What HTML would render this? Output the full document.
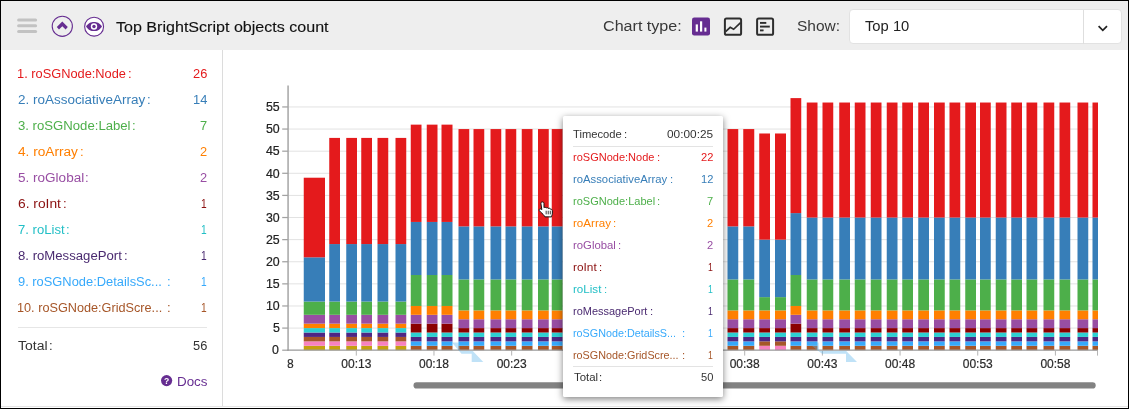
<!DOCTYPE html><html><head><meta charset="utf-8"><title>Top BrightScript objects count</title>
<style>

html,body{margin:0;padding:0;}
body{width:1129px;height:409px;overflow:hidden;background:#fff;font-family:"Liberation Sans", sans-serif;position:relative;}
.abs{position:absolute;}
.t{position:absolute;white-space:nowrap;line-height:1;font-family:"Liberation Sans", sans-serif;transform-origin:0 0;}
#txt{position:absolute;left:0;top:0;width:1129px;height:409px;will-change:transform;}
#frame{position:absolute;left:0;top:0;width:1127px;height:407px;border:1px solid #000;z-index:50;pointer-events:none;}
#hdr{position:absolute;left:1px;top:1px;width:1127px;height:49px;background:#eee;}
#vdiv{position:absolute;left:222px;top:50px;width:1px;height:357px;background:#dcdcdc;}
#botline{position:absolute;left:1px;top:406px;width:1127px;height:1px;background:#e4e4e4;}
#sel{position:absolute;left:849.4px;top:8.8px;width:273.1px;height:35.7px;background:#fff;border:1px solid #e2e2e2;border-radius:4px;box-sizing:border-box;}
#seldiv{position:absolute;left:1083px;top:10px;width:1px;height:34px;background:#dedede;}
#tip{position:absolute;left:563px;top:116px;width:160px;height:281px;background:#fff;border-radius:1.5px;box-shadow:0 2px 7px rgba(0,0,0,.5);}
.hl{position:absolute;height:1px;background:#e3e3e3;}

</style></head><body>
<div id="hdr"></div>
<svg class="abs" style="left:0;top:0" width="1129" height="51" viewBox="0 0 1129 51">
<line x1="18.6" y1="20.0" x2="35.6" y2="20.0" stroke="#c2c2c2" stroke-width="3.0" stroke-linecap="round"/>
<line x1="18.6" y1="25.7" x2="35.6" y2="25.7" stroke="#c2c2c2" stroke-width="3.0" stroke-linecap="round"/>
<line x1="18.6" y1="31.4" x2="35.6" y2="31.4" stroke="#c2c2c2" stroke-width="3.0" stroke-linecap="round"/>
<circle cx="62.3" cy="26.3" r="10.1" fill="none" stroke="#662d91" stroke-width="1.1"/>
<path d="M62.3 21.6 L67.8 27.1 L65.6 29.6 L62.3 26.2 L59.0 29.6 L56.8 27.1 Z" fill="#662d91"/>
<circle cx="94.1" cy="26.65" r="9.45" fill="#fff" stroke="#662d91" stroke-width="1.1"/>
<path d="M86 26.5 C88.5 22.6 91.2 21.9 94 21.9 C96.8 21.9 99.5 22.6 102 26.5 C99.5 30.4 96.8 31.1 94 31.1 C91.2 31.1 88.5 30.4 86 26.5 Z" fill="#662d91"/>
<circle cx="94" cy="26.5" r="3.2" fill="#fff"/>
<circle cx="94" cy="26.5" r="1.7" fill="#662d91"/>
<rect x="692" y="17.5" width="18" height="18" rx="2.2" fill="#662d91"/>
<rect x="695.7" y="24.4" width="2.2" height="7.2" fill="#fff"/>
<rect x="700.0" y="21.3" width="2.2" height="10.3" fill="#fff"/>
<rect x="704.4" y="27.6" width="2.0" height="4.0" fill="#fff"/>
<rect x="724.9" y="18.6" width="16.2" height="16.2" rx="1.6" fill="none" stroke="#2e2e2e" stroke-width="2.0"/>
<polyline points="725.6,31.6 730.2,27.3 733.6,29.3 740.6,22.6" fill="none" stroke="#2e2e2e" stroke-width="1.7"/>
<rect x="757.1" y="18.6" width="16.0" height="16.2" rx="1.6" fill="none" stroke="#2e2e2e" stroke-width="2.0"/>
<line x1="760" y1="22.9" x2="766.3" y2="22.9" stroke="#2e2e2e" stroke-width="1.9"/>
<line x1="760" y1="26.6" x2="769.8" y2="26.6" stroke="#2e2e2e" stroke-width="1.9"/>
<line x1="760" y1="30.4" x2="763.6" y2="30.4" stroke="#2e2e2e" stroke-width="1.9"/>
</svg>
<div id="sel"></div><div id="seldiv"></div>
<svg class="abs" style="left:1090px;top:18px" width="26" height="20" viewBox="1090 18 26 20"><polyline points="1098.6,26.1 1102.8,30.4 1107.0,26.1" fill="none" stroke="#222" stroke-width="1.7" stroke-linecap="butt" stroke-linejoin="miter"/></svg>
<div id="vdiv"></div><div id="botline"></div>
<div class="hl" style="left:18.4px;top:327px;width:188.3px;background:#e6e6e6"></div>
<svg class="abs" style="left:158px;top:372px;will-change:transform" width="18" height="18" viewBox="158 372 18 18"><circle cx="166.6" cy="380.6" r="5.6" fill="#662d91"/><text x="166.6" y="383.7" font-size="8.6" font-weight="700" fill="#fff" text-anchor="middle" font-family='"Liberation Sans", sans-serif'>?</text></svg>
<svg class="abs" style="left:0;top:0;will-change:transform" width="1129" height="409" viewBox="0 0 1129 409">
<defs><clipPath id="cp"><rect x="288" y="60" width="810" height="330"/></clipPath><clipPath id="cpx"><rect x="287.3" y="351" width="815" height="30"/></clipPath></defs>
<line x1="288.5" y1="328.09" x2="1098" y2="328.09" stroke="#e2e2e2" stroke-width="1"/>
<line x1="288.5" y1="305.97" x2="1098" y2="305.97" stroke="#e2e2e2" stroke-width="1"/>
<line x1="288.5" y1="283.86" x2="1098" y2="283.86" stroke="#e2e2e2" stroke-width="1"/>
<line x1="288.5" y1="261.75" x2="1098" y2="261.75" stroke="#e2e2e2" stroke-width="1"/>
<line x1="288.5" y1="239.63" x2="1098" y2="239.63" stroke="#e2e2e2" stroke-width="1"/>
<line x1="288.5" y1="217.52" x2="1098" y2="217.52" stroke="#e2e2e2" stroke-width="1"/>
<line x1="288.5" y1="195.41" x2="1098" y2="195.41" stroke="#e2e2e2" stroke-width="1"/>
<line x1="288.5" y1="173.29" x2="1098" y2="173.29" stroke="#e2e2e2" stroke-width="1"/>
<line x1="288.5" y1="151.18" x2="1098" y2="151.18" stroke="#e2e2e2" stroke-width="1"/>
<line x1="288.5" y1="129.06" x2="1098" y2="129.06" stroke="#e2e2e2" stroke-width="1"/>
<line x1="288.5" y1="106.95" x2="1098" y2="106.95" stroke="#e2e2e2" stroke-width="1"/>
<g clip-path="url(#cp)">
<rect x="303.75" y="345.777" width="21.25" height="4.423" fill="#c5a00f"/>
<rect x="303.75" y="341.355" width="21.25" height="4.423" fill="#f781bf"/>
<rect x="303.75" y="336.932" width="21.25" height="4.423" fill="#a65628"/>
<rect x="303.75" y="332.509" width="21.25" height="4.423" fill="#4f2683"/>
<rect x="303.75" y="328.087" width="21.25" height="4.423" fill="#2ecfd2"/>
<rect x="303.75" y="323.664" width="21.25" height="4.423" fill="#ff7f00"/>
<rect x="303.75" y="314.818" width="21.25" height="8.845" fill="#984ea3"/>
<rect x="303.75" y="301.550" width="21.25" height="13.268" fill="#4daf4a"/>
<rect x="303.75" y="257.323" width="21.25" height="44.227" fill="#377eb8"/>
<rect x="303.75" y="177.715" width="21.25" height="79.609" fill="#e41a1c"/>
<rect x="329.25" y="345.777" width="10.75" height="4.423" fill="#c5a00f"/>
<rect x="329.25" y="341.355" width="10.75" height="4.423" fill="#f781bf"/>
<rect x="329.25" y="336.932" width="10.75" height="4.423" fill="#a65628"/>
<rect x="329.25" y="332.509" width="10.75" height="4.423" fill="#4f2683"/>
<rect x="329.25" y="328.087" width="10.75" height="4.423" fill="#2ecfd2"/>
<rect x="329.25" y="323.664" width="10.75" height="4.423" fill="#ff7f00"/>
<rect x="329.25" y="314.818" width="10.75" height="8.845" fill="#984ea3"/>
<rect x="329.25" y="301.550" width="10.75" height="13.268" fill="#4daf4a"/>
<rect x="329.25" y="244.055" width="10.75" height="57.495" fill="#377eb8"/>
<rect x="329.25" y="137.910" width="10.75" height="106.145" fill="#e41a1c"/>
<rect x="346.25" y="345.777" width="10.75" height="4.423" fill="#c5a00f"/>
<rect x="346.25" y="341.355" width="10.75" height="4.423" fill="#f781bf"/>
<rect x="346.25" y="336.932" width="10.75" height="4.423" fill="#a65628"/>
<rect x="346.25" y="332.509" width="10.75" height="4.423" fill="#4f2683"/>
<rect x="346.25" y="328.087" width="10.75" height="4.423" fill="#2ecfd2"/>
<rect x="346.25" y="323.664" width="10.75" height="4.423" fill="#ff7f00"/>
<rect x="346.25" y="314.818" width="10.75" height="8.845" fill="#984ea3"/>
<rect x="346.25" y="301.550" width="10.75" height="13.268" fill="#4daf4a"/>
<rect x="346.25" y="244.055" width="10.75" height="57.495" fill="#377eb8"/>
<rect x="346.25" y="137.910" width="10.75" height="106.145" fill="#e41a1c"/>
<rect x="361.25" y="345.777" width="10.75" height="4.423" fill="#c5a00f"/>
<rect x="361.25" y="341.355" width="10.75" height="4.423" fill="#f781bf"/>
<rect x="361.25" y="336.932" width="10.75" height="4.423" fill="#a65628"/>
<rect x="361.25" y="332.509" width="10.75" height="4.423" fill="#4f2683"/>
<rect x="361.25" y="328.087" width="10.75" height="4.423" fill="#2ecfd2"/>
<rect x="361.25" y="323.664" width="10.75" height="4.423" fill="#ff7f00"/>
<rect x="361.25" y="314.818" width="10.75" height="8.845" fill="#984ea3"/>
<rect x="361.25" y="301.550" width="10.75" height="13.268" fill="#4daf4a"/>
<rect x="361.25" y="244.055" width="10.75" height="57.495" fill="#377eb8"/>
<rect x="361.25" y="137.910" width="10.75" height="106.145" fill="#e41a1c"/>
<rect x="377.5" y="345.777" width="10.75" height="4.423" fill="#c5a00f"/>
<rect x="377.5" y="341.355" width="10.75" height="4.423" fill="#f781bf"/>
<rect x="377.5" y="336.932" width="10.75" height="4.423" fill="#a65628"/>
<rect x="377.5" y="332.509" width="10.75" height="4.423" fill="#4f2683"/>
<rect x="377.5" y="328.087" width="10.75" height="4.423" fill="#2ecfd2"/>
<rect x="377.5" y="323.664" width="10.75" height="4.423" fill="#ff7f00"/>
<rect x="377.5" y="314.818" width="10.75" height="8.845" fill="#984ea3"/>
<rect x="377.5" y="301.550" width="10.75" height="13.268" fill="#4daf4a"/>
<rect x="377.5" y="244.055" width="10.75" height="57.495" fill="#377eb8"/>
<rect x="377.5" y="137.910" width="10.75" height="106.145" fill="#e41a1c"/>
<rect x="395.5" y="345.777" width="10.75" height="4.423" fill="#c5a00f"/>
<rect x="395.5" y="341.355" width="10.75" height="4.423" fill="#f781bf"/>
<rect x="395.5" y="336.932" width="10.75" height="4.423" fill="#a65628"/>
<rect x="395.5" y="332.509" width="10.75" height="4.423" fill="#4f2683"/>
<rect x="395.5" y="328.087" width="10.75" height="4.423" fill="#2ecfd2"/>
<rect x="395.5" y="323.664" width="10.75" height="4.423" fill="#ff7f00"/>
<rect x="395.5" y="314.818" width="10.75" height="8.845" fill="#984ea3"/>
<rect x="395.5" y="301.550" width="10.75" height="13.268" fill="#4daf4a"/>
<rect x="395.5" y="244.055" width="10.75" height="57.495" fill="#377eb8"/>
<rect x="395.5" y="137.910" width="10.75" height="106.145" fill="#e41a1c"/>
<rect x="410.75" y="345.777" width="10.75" height="4.423" fill="#a65628"/>
<rect x="410.75" y="341.355" width="10.75" height="4.423" fill="#36a9fb"/>
<rect x="410.75" y="336.932" width="10.75" height="4.423" fill="#4f2683"/>
<rect x="410.75" y="332.509" width="10.75" height="4.423" fill="#2ecfd2"/>
<rect x="410.75" y="323.664" width="10.75" height="8.845" fill="#8b0000"/>
<rect x="410.75" y="314.818" width="10.75" height="8.845" fill="#984ea3"/>
<rect x="410.75" y="305.973" width="10.75" height="8.845" fill="#ff7f00"/>
<rect x="410.75" y="275.014" width="10.75" height="30.959" fill="#4daf4a"/>
<rect x="410.75" y="221.942" width="10.75" height="53.072" fill="#377eb8"/>
<rect x="410.75" y="124.642" width="10.75" height="97.299" fill="#e41a1c"/>
<rect x="426.75" y="345.777" width="10.75" height="4.423" fill="#a65628"/>
<rect x="426.75" y="341.355" width="10.75" height="4.423" fill="#36a9fb"/>
<rect x="426.75" y="336.932" width="10.75" height="4.423" fill="#4f2683"/>
<rect x="426.75" y="332.509" width="10.75" height="4.423" fill="#2ecfd2"/>
<rect x="426.75" y="323.664" width="10.75" height="8.845" fill="#8b0000"/>
<rect x="426.75" y="314.818" width="10.75" height="8.845" fill="#984ea3"/>
<rect x="426.75" y="305.973" width="10.75" height="8.845" fill="#ff7f00"/>
<rect x="426.75" y="275.014" width="10.75" height="30.959" fill="#4daf4a"/>
<rect x="426.75" y="221.942" width="10.75" height="53.072" fill="#377eb8"/>
<rect x="426.75" y="124.642" width="10.75" height="97.299" fill="#e41a1c"/>
<rect x="441.5" y="345.777" width="11.00" height="4.423" fill="#a65628"/>
<rect x="441.5" y="341.355" width="11.00" height="4.423" fill="#36a9fb"/>
<rect x="441.5" y="336.932" width="11.00" height="4.423" fill="#4f2683"/>
<rect x="441.5" y="332.509" width="11.00" height="4.423" fill="#2ecfd2"/>
<rect x="441.5" y="323.664" width="11.00" height="8.845" fill="#8b0000"/>
<rect x="441.5" y="314.818" width="11.00" height="8.845" fill="#984ea3"/>
<rect x="441.5" y="305.973" width="11.00" height="8.845" fill="#ff7f00"/>
<rect x="441.5" y="275.014" width="11.00" height="30.959" fill="#4daf4a"/>
<rect x="441.5" y="221.942" width="11.00" height="53.072" fill="#377eb8"/>
<rect x="441.5" y="124.642" width="11.00" height="97.299" fill="#e41a1c"/>
<rect x="458.5" y="345.777" width="10.75" height="4.423" fill="#a65628"/>
<rect x="458.5" y="341.355" width="10.75" height="4.423" fill="#36a9fb"/>
<rect x="458.5" y="336.932" width="10.75" height="4.423" fill="#4f2683"/>
<rect x="458.5" y="332.509" width="10.75" height="4.423" fill="#2ecfd2"/>
<rect x="458.5" y="328.087" width="10.75" height="4.423" fill="#8b0000"/>
<rect x="458.5" y="319.241" width="10.75" height="8.845" fill="#984ea3"/>
<rect x="458.5" y="310.396" width="10.75" height="8.845" fill="#ff7f00"/>
<rect x="458.5" y="279.437" width="10.75" height="30.959" fill="#4daf4a"/>
<rect x="458.5" y="226.364" width="10.75" height="53.072" fill="#377eb8"/>
<rect x="458.5" y="129.065" width="10.75" height="97.299" fill="#e41a1c"/>
<rect x="473.5" y="345.777" width="10.75" height="4.423" fill="#a65628"/>
<rect x="473.5" y="341.355" width="10.75" height="4.423" fill="#36a9fb"/>
<rect x="473.5" y="336.932" width="10.75" height="4.423" fill="#4f2683"/>
<rect x="473.5" y="332.509" width="10.75" height="4.423" fill="#2ecfd2"/>
<rect x="473.5" y="328.087" width="10.75" height="4.423" fill="#8b0000"/>
<rect x="473.5" y="319.241" width="10.75" height="8.845" fill="#984ea3"/>
<rect x="473.5" y="310.396" width="10.75" height="8.845" fill="#ff7f00"/>
<rect x="473.5" y="279.437" width="10.75" height="30.959" fill="#4daf4a"/>
<rect x="473.5" y="226.364" width="10.75" height="53.072" fill="#377eb8"/>
<rect x="473.5" y="129.065" width="10.75" height="97.299" fill="#e41a1c"/>
<rect x="490.5" y="345.777" width="10.75" height="4.423" fill="#a65628"/>
<rect x="490.5" y="341.355" width="10.75" height="4.423" fill="#36a9fb"/>
<rect x="490.5" y="336.932" width="10.75" height="4.423" fill="#4f2683"/>
<rect x="490.5" y="332.509" width="10.75" height="4.423" fill="#2ecfd2"/>
<rect x="490.5" y="328.087" width="10.75" height="4.423" fill="#8b0000"/>
<rect x="490.5" y="319.241" width="10.75" height="8.845" fill="#984ea3"/>
<rect x="490.5" y="310.396" width="10.75" height="8.845" fill="#ff7f00"/>
<rect x="490.5" y="279.437" width="10.75" height="30.959" fill="#4daf4a"/>
<rect x="490.5" y="226.364" width="10.75" height="53.072" fill="#377eb8"/>
<rect x="490.5" y="129.065" width="10.75" height="97.299" fill="#e41a1c"/>
<rect x="505.5" y="345.777" width="10.75" height="4.423" fill="#a65628"/>
<rect x="505.5" y="341.355" width="10.75" height="4.423" fill="#36a9fb"/>
<rect x="505.5" y="336.932" width="10.75" height="4.423" fill="#4f2683"/>
<rect x="505.5" y="332.509" width="10.75" height="4.423" fill="#2ecfd2"/>
<rect x="505.5" y="328.087" width="10.75" height="4.423" fill="#8b0000"/>
<rect x="505.5" y="319.241" width="10.75" height="8.845" fill="#984ea3"/>
<rect x="505.5" y="310.396" width="10.75" height="8.845" fill="#ff7f00"/>
<rect x="505.5" y="279.437" width="10.75" height="30.959" fill="#4daf4a"/>
<rect x="505.5" y="226.364" width="10.75" height="53.072" fill="#377eb8"/>
<rect x="505.5" y="129.065" width="10.75" height="97.299" fill="#e41a1c"/>
<rect x="521.75" y="345.777" width="10.75" height="4.423" fill="#a65628"/>
<rect x="521.75" y="341.355" width="10.75" height="4.423" fill="#36a9fb"/>
<rect x="521.75" y="336.932" width="10.75" height="4.423" fill="#4f2683"/>
<rect x="521.75" y="332.509" width="10.75" height="4.423" fill="#2ecfd2"/>
<rect x="521.75" y="328.087" width="10.75" height="4.423" fill="#8b0000"/>
<rect x="521.75" y="319.241" width="10.75" height="8.845" fill="#984ea3"/>
<rect x="521.75" y="310.396" width="10.75" height="8.845" fill="#ff7f00"/>
<rect x="521.75" y="279.437" width="10.75" height="30.959" fill="#4daf4a"/>
<rect x="521.75" y="226.364" width="10.75" height="53.072" fill="#377eb8"/>
<rect x="521.75" y="129.065" width="10.75" height="97.299" fill="#e41a1c"/>
<rect x="538.0" y="345.777" width="10.75" height="4.423" fill="#a65628"/>
<rect x="538.0" y="341.355" width="10.75" height="4.423" fill="#36a9fb"/>
<rect x="538.0" y="336.932" width="10.75" height="4.423" fill="#4f2683"/>
<rect x="538.0" y="332.509" width="10.75" height="4.423" fill="#2ecfd2"/>
<rect x="538.0" y="328.087" width="10.75" height="4.423" fill="#8b0000"/>
<rect x="538.0" y="319.241" width="10.75" height="8.845" fill="#984ea3"/>
<rect x="538.0" y="310.396" width="10.75" height="8.845" fill="#ff7f00"/>
<rect x="538.0" y="279.437" width="10.75" height="30.959" fill="#4daf4a"/>
<rect x="538.0" y="226.364" width="10.75" height="53.072" fill="#377eb8"/>
<rect x="538.0" y="129.065" width="10.75" height="97.299" fill="#e41a1c"/>
<rect x="551.75" y="345.777" width="10.75" height="4.423" fill="#a65628"/>
<rect x="551.75" y="341.355" width="10.75" height="4.423" fill="#36a9fb"/>
<rect x="551.75" y="336.932" width="10.75" height="4.423" fill="#4f2683"/>
<rect x="551.75" y="332.509" width="10.75" height="4.423" fill="#2ecfd2"/>
<rect x="551.75" y="328.087" width="10.75" height="4.423" fill="#8b0000"/>
<rect x="551.75" y="319.241" width="10.75" height="8.845" fill="#984ea3"/>
<rect x="551.75" y="310.396" width="10.75" height="8.845" fill="#ff7f00"/>
<rect x="551.75" y="279.437" width="10.75" height="30.959" fill="#4daf4a"/>
<rect x="551.75" y="226.364" width="10.75" height="53.072" fill="#377eb8"/>
<rect x="551.75" y="129.065" width="10.75" height="97.299" fill="#e41a1c"/>
<rect x="567.5" y="345.777" width="10.75" height="4.423" fill="#a65628"/>
<rect x="567.5" y="341.355" width="10.75" height="4.423" fill="#36a9fb"/>
<rect x="567.5" y="336.932" width="10.75" height="4.423" fill="#4f2683"/>
<rect x="567.5" y="332.509" width="10.75" height="4.423" fill="#2ecfd2"/>
<rect x="567.5" y="328.087" width="10.75" height="4.423" fill="#8b0000"/>
<rect x="567.5" y="319.241" width="10.75" height="8.845" fill="#984ea3"/>
<rect x="567.5" y="310.396" width="10.75" height="8.845" fill="#ff7f00"/>
<rect x="567.5" y="279.437" width="10.75" height="30.959" fill="#4daf4a"/>
<rect x="567.5" y="226.364" width="10.75" height="53.072" fill="#377eb8"/>
<rect x="567.5" y="129.065" width="10.75" height="97.299" fill="#e41a1c"/>
<rect x="583.0" y="345.777" width="10.75" height="4.423" fill="#a65628"/>
<rect x="583.0" y="341.355" width="10.75" height="4.423" fill="#36a9fb"/>
<rect x="583.0" y="336.932" width="10.75" height="4.423" fill="#4f2683"/>
<rect x="583.0" y="332.509" width="10.75" height="4.423" fill="#2ecfd2"/>
<rect x="583.0" y="328.087" width="10.75" height="4.423" fill="#8b0000"/>
<rect x="583.0" y="319.241" width="10.75" height="8.845" fill="#984ea3"/>
<rect x="583.0" y="310.396" width="10.75" height="8.845" fill="#ff7f00"/>
<rect x="583.0" y="279.437" width="10.75" height="30.959" fill="#4daf4a"/>
<rect x="583.0" y="226.364" width="10.75" height="53.072" fill="#377eb8"/>
<rect x="583.0" y="129.065" width="10.75" height="97.299" fill="#e41a1c"/>
<rect x="598.5" y="345.777" width="10.75" height="4.423" fill="#a65628"/>
<rect x="598.5" y="341.355" width="10.75" height="4.423" fill="#36a9fb"/>
<rect x="598.5" y="336.932" width="10.75" height="4.423" fill="#4f2683"/>
<rect x="598.5" y="332.509" width="10.75" height="4.423" fill="#2ecfd2"/>
<rect x="598.5" y="328.087" width="10.75" height="4.423" fill="#8b0000"/>
<rect x="598.5" y="319.241" width="10.75" height="8.845" fill="#984ea3"/>
<rect x="598.5" y="310.396" width="10.75" height="8.845" fill="#ff7f00"/>
<rect x="598.5" y="279.437" width="10.75" height="30.959" fill="#4daf4a"/>
<rect x="598.5" y="226.364" width="10.75" height="53.072" fill="#377eb8"/>
<rect x="598.5" y="129.065" width="10.75" height="97.299" fill="#e41a1c"/>
<rect x="614.0" y="345.777" width="10.75" height="4.423" fill="#a65628"/>
<rect x="614.0" y="341.355" width="10.75" height="4.423" fill="#36a9fb"/>
<rect x="614.0" y="336.932" width="10.75" height="4.423" fill="#4f2683"/>
<rect x="614.0" y="332.509" width="10.75" height="4.423" fill="#2ecfd2"/>
<rect x="614.0" y="328.087" width="10.75" height="4.423" fill="#8b0000"/>
<rect x="614.0" y="319.241" width="10.75" height="8.845" fill="#984ea3"/>
<rect x="614.0" y="310.396" width="10.75" height="8.845" fill="#ff7f00"/>
<rect x="614.0" y="279.437" width="10.75" height="30.959" fill="#4daf4a"/>
<rect x="614.0" y="226.364" width="10.75" height="53.072" fill="#377eb8"/>
<rect x="614.0" y="129.065" width="10.75" height="97.299" fill="#e41a1c"/>
<rect x="630.0" y="345.777" width="10.75" height="4.423" fill="#a65628"/>
<rect x="630.0" y="341.355" width="10.75" height="4.423" fill="#36a9fb"/>
<rect x="630.0" y="336.932" width="10.75" height="4.423" fill="#4f2683"/>
<rect x="630.0" y="332.509" width="10.75" height="4.423" fill="#2ecfd2"/>
<rect x="630.0" y="328.087" width="10.75" height="4.423" fill="#8b0000"/>
<rect x="630.0" y="319.241" width="10.75" height="8.845" fill="#984ea3"/>
<rect x="630.0" y="310.396" width="10.75" height="8.845" fill="#ff7f00"/>
<rect x="630.0" y="279.437" width="10.75" height="30.959" fill="#4daf4a"/>
<rect x="630.0" y="226.364" width="10.75" height="53.072" fill="#377eb8"/>
<rect x="630.0" y="129.065" width="10.75" height="97.299" fill="#e41a1c"/>
<rect x="645.5" y="345.777" width="10.75" height="4.423" fill="#a65628"/>
<rect x="645.5" y="341.355" width="10.75" height="4.423" fill="#36a9fb"/>
<rect x="645.5" y="336.932" width="10.75" height="4.423" fill="#4f2683"/>
<rect x="645.5" y="332.509" width="10.75" height="4.423" fill="#2ecfd2"/>
<rect x="645.5" y="328.087" width="10.75" height="4.423" fill="#8b0000"/>
<rect x="645.5" y="319.241" width="10.75" height="8.845" fill="#984ea3"/>
<rect x="645.5" y="310.396" width="10.75" height="8.845" fill="#ff7f00"/>
<rect x="645.5" y="279.437" width="10.75" height="30.959" fill="#4daf4a"/>
<rect x="645.5" y="226.364" width="10.75" height="53.072" fill="#377eb8"/>
<rect x="645.5" y="129.065" width="10.75" height="97.299" fill="#e41a1c"/>
<rect x="661.0" y="345.777" width="10.75" height="4.423" fill="#a65628"/>
<rect x="661.0" y="341.355" width="10.75" height="4.423" fill="#36a9fb"/>
<rect x="661.0" y="336.932" width="10.75" height="4.423" fill="#4f2683"/>
<rect x="661.0" y="332.509" width="10.75" height="4.423" fill="#2ecfd2"/>
<rect x="661.0" y="328.087" width="10.75" height="4.423" fill="#8b0000"/>
<rect x="661.0" y="319.241" width="10.75" height="8.845" fill="#984ea3"/>
<rect x="661.0" y="310.396" width="10.75" height="8.845" fill="#ff7f00"/>
<rect x="661.0" y="279.437" width="10.75" height="30.959" fill="#4daf4a"/>
<rect x="661.0" y="226.364" width="10.75" height="53.072" fill="#377eb8"/>
<rect x="661.0" y="129.065" width="10.75" height="97.299" fill="#e41a1c"/>
<rect x="676.5" y="345.777" width="10.75" height="4.423" fill="#a65628"/>
<rect x="676.5" y="341.355" width="10.75" height="4.423" fill="#36a9fb"/>
<rect x="676.5" y="336.932" width="10.75" height="4.423" fill="#4f2683"/>
<rect x="676.5" y="332.509" width="10.75" height="4.423" fill="#2ecfd2"/>
<rect x="676.5" y="328.087" width="10.75" height="4.423" fill="#8b0000"/>
<rect x="676.5" y="319.241" width="10.75" height="8.845" fill="#984ea3"/>
<rect x="676.5" y="310.396" width="10.75" height="8.845" fill="#ff7f00"/>
<rect x="676.5" y="279.437" width="10.75" height="30.959" fill="#4daf4a"/>
<rect x="676.5" y="226.364" width="10.75" height="53.072" fill="#377eb8"/>
<rect x="676.5" y="129.065" width="10.75" height="97.299" fill="#e41a1c"/>
<rect x="692.0" y="345.777" width="10.75" height="4.423" fill="#a65628"/>
<rect x="692.0" y="341.355" width="10.75" height="4.423" fill="#36a9fb"/>
<rect x="692.0" y="336.932" width="10.75" height="4.423" fill="#4f2683"/>
<rect x="692.0" y="332.509" width="10.75" height="4.423" fill="#2ecfd2"/>
<rect x="692.0" y="328.087" width="10.75" height="4.423" fill="#8b0000"/>
<rect x="692.0" y="319.241" width="10.75" height="8.845" fill="#984ea3"/>
<rect x="692.0" y="310.396" width="10.75" height="8.845" fill="#ff7f00"/>
<rect x="692.0" y="279.437" width="10.75" height="30.959" fill="#4daf4a"/>
<rect x="692.0" y="226.364" width="10.75" height="53.072" fill="#377eb8"/>
<rect x="692.0" y="129.065" width="10.75" height="97.299" fill="#e41a1c"/>
<rect x="712.0" y="345.777" width="10.75" height="4.423" fill="#a65628"/>
<rect x="712.0" y="341.355" width="10.75" height="4.423" fill="#36a9fb"/>
<rect x="712.0" y="336.932" width="10.75" height="4.423" fill="#4f2683"/>
<rect x="712.0" y="332.509" width="10.75" height="4.423" fill="#2ecfd2"/>
<rect x="712.0" y="328.087" width="10.75" height="4.423" fill="#8b0000"/>
<rect x="712.0" y="319.241" width="10.75" height="8.845" fill="#984ea3"/>
<rect x="712.0" y="310.396" width="10.75" height="8.845" fill="#ff7f00"/>
<rect x="712.0" y="279.437" width="10.75" height="30.959" fill="#4daf4a"/>
<rect x="712.0" y="226.364" width="10.75" height="53.072" fill="#377eb8"/>
<rect x="712.0" y="129.065" width="10.75" height="97.299" fill="#e41a1c"/>
<rect x="727.5" y="345.777" width="10.75" height="4.423" fill="#a65628"/>
<rect x="727.5" y="341.355" width="10.75" height="4.423" fill="#36a9fb"/>
<rect x="727.5" y="336.932" width="10.75" height="4.423" fill="#4f2683"/>
<rect x="727.5" y="332.509" width="10.75" height="4.423" fill="#2ecfd2"/>
<rect x="727.5" y="328.087" width="10.75" height="4.423" fill="#8b0000"/>
<rect x="727.5" y="319.241" width="10.75" height="8.845" fill="#984ea3"/>
<rect x="727.5" y="310.396" width="10.75" height="8.845" fill="#ff7f00"/>
<rect x="727.5" y="279.437" width="10.75" height="30.959" fill="#4daf4a"/>
<rect x="727.5" y="226.364" width="10.75" height="53.072" fill="#377eb8"/>
<rect x="727.5" y="129.065" width="10.75" height="97.299" fill="#e41a1c"/>
<rect x="743.25" y="345.777" width="11.00" height="4.423" fill="#a65628"/>
<rect x="743.25" y="341.355" width="11.00" height="4.423" fill="#36a9fb"/>
<rect x="743.25" y="336.932" width="11.00" height="4.423" fill="#4f2683"/>
<rect x="743.25" y="332.509" width="11.00" height="4.423" fill="#2ecfd2"/>
<rect x="743.25" y="328.087" width="11.00" height="4.423" fill="#8b0000"/>
<rect x="743.25" y="319.241" width="11.00" height="8.845" fill="#984ea3"/>
<rect x="743.25" y="310.396" width="11.00" height="8.845" fill="#ff7f00"/>
<rect x="743.25" y="279.437" width="11.00" height="30.959" fill="#4daf4a"/>
<rect x="743.25" y="226.364" width="11.00" height="53.072" fill="#377eb8"/>
<rect x="743.25" y="129.065" width="11.00" height="97.299" fill="#e41a1c"/>
<rect x="759.25" y="345.777" width="10.75" height="4.423" fill="#f781bf"/>
<rect x="759.25" y="341.355" width="10.75" height="4.423" fill="#a65628"/>
<rect x="759.25" y="336.932" width="10.75" height="4.423" fill="#4f2683"/>
<rect x="759.25" y="332.509" width="10.75" height="4.423" fill="#2ecfd2"/>
<rect x="759.25" y="328.087" width="10.75" height="4.423" fill="#8b0000"/>
<rect x="759.25" y="319.241" width="10.75" height="8.845" fill="#984ea3"/>
<rect x="759.25" y="310.396" width="10.75" height="8.845" fill="#ff7f00"/>
<rect x="759.25" y="297.128" width="10.75" height="13.268" fill="#4daf4a"/>
<rect x="759.25" y="239.632" width="10.75" height="57.495" fill="#377eb8"/>
<rect x="759.25" y="133.488" width="10.75" height="106.145" fill="#e41a1c"/>
<rect x="775.0" y="345.777" width="11.00" height="4.423" fill="#f781bf"/>
<rect x="775.0" y="341.355" width="11.00" height="4.423" fill="#a65628"/>
<rect x="775.0" y="336.932" width="11.00" height="4.423" fill="#4f2683"/>
<rect x="775.0" y="332.509" width="11.00" height="4.423" fill="#2ecfd2"/>
<rect x="775.0" y="328.087" width="11.00" height="4.423" fill="#8b0000"/>
<rect x="775.0" y="319.241" width="11.00" height="8.845" fill="#984ea3"/>
<rect x="775.0" y="310.396" width="11.00" height="8.845" fill="#ff7f00"/>
<rect x="775.0" y="297.128" width="11.00" height="13.268" fill="#4daf4a"/>
<rect x="775.0" y="239.632" width="11.00" height="57.495" fill="#377eb8"/>
<rect x="775.0" y="133.488" width="11.00" height="106.145" fill="#e41a1c"/>
<rect x="790.5" y="345.777" width="10.75" height="4.423" fill="#a65628"/>
<rect x="790.5" y="341.355" width="10.75" height="4.423" fill="#36a9fb"/>
<rect x="790.5" y="336.932" width="10.75" height="4.423" fill="#4f2683"/>
<rect x="790.5" y="332.509" width="10.75" height="4.423" fill="#2ecfd2"/>
<rect x="790.5" y="323.664" width="10.75" height="8.845" fill="#8b0000"/>
<rect x="790.5" y="314.818" width="10.75" height="8.845" fill="#984ea3"/>
<rect x="790.5" y="305.973" width="10.75" height="8.845" fill="#ff7f00"/>
<rect x="790.5" y="275.014" width="10.75" height="30.959" fill="#4daf4a"/>
<rect x="790.5" y="213.096" width="10.75" height="61.918" fill="#377eb8"/>
<rect x="790.5" y="98.106" width="10.75" height="114.990" fill="#e41a1c"/>
<rect x="806.75" y="345.777" width="10.75" height="4.423" fill="#a65628"/>
<rect x="806.75" y="341.355" width="10.75" height="4.423" fill="#36a9fb"/>
<rect x="806.75" y="336.932" width="10.75" height="4.423" fill="#4f2683"/>
<rect x="806.75" y="332.509" width="10.75" height="4.423" fill="#2ecfd2"/>
<rect x="806.75" y="328.087" width="10.75" height="4.423" fill="#8b0000"/>
<rect x="806.75" y="319.241" width="10.75" height="8.845" fill="#984ea3"/>
<rect x="806.75" y="310.396" width="10.75" height="8.845" fill="#ff7f00"/>
<rect x="806.75" y="279.437" width="10.75" height="30.959" fill="#4daf4a"/>
<rect x="806.75" y="217.519" width="10.75" height="61.918" fill="#377eb8"/>
<rect x="806.75" y="102.529" width="10.75" height="114.990" fill="#e41a1c"/>
<rect x="822.5" y="345.777" width="10.75" height="4.423" fill="#a65628"/>
<rect x="822.5" y="341.355" width="10.75" height="4.423" fill="#36a9fb"/>
<rect x="822.5" y="336.932" width="10.75" height="4.423" fill="#4f2683"/>
<rect x="822.5" y="332.509" width="10.75" height="4.423" fill="#2ecfd2"/>
<rect x="822.5" y="328.087" width="10.75" height="4.423" fill="#8b0000"/>
<rect x="822.5" y="319.241" width="10.75" height="8.845" fill="#984ea3"/>
<rect x="822.5" y="310.396" width="10.75" height="8.845" fill="#ff7f00"/>
<rect x="822.5" y="279.437" width="10.75" height="30.959" fill="#4daf4a"/>
<rect x="822.5" y="217.519" width="10.75" height="61.918" fill="#377eb8"/>
<rect x="822.5" y="102.529" width="10.75" height="114.990" fill="#e41a1c"/>
<rect x="839.25" y="345.777" width="10.75" height="4.423" fill="#a65628"/>
<rect x="839.25" y="341.355" width="10.75" height="4.423" fill="#36a9fb"/>
<rect x="839.25" y="336.932" width="10.75" height="4.423" fill="#4f2683"/>
<rect x="839.25" y="332.509" width="10.75" height="4.423" fill="#2ecfd2"/>
<rect x="839.25" y="328.087" width="10.75" height="4.423" fill="#8b0000"/>
<rect x="839.25" y="319.241" width="10.75" height="8.845" fill="#984ea3"/>
<rect x="839.25" y="310.396" width="10.75" height="8.845" fill="#ff7f00"/>
<rect x="839.25" y="279.437" width="10.75" height="30.959" fill="#4daf4a"/>
<rect x="839.25" y="217.519" width="10.75" height="61.918" fill="#377eb8"/>
<rect x="839.25" y="102.529" width="10.75" height="114.990" fill="#e41a1c"/>
<rect x="854.75" y="345.777" width="10.75" height="4.423" fill="#a65628"/>
<rect x="854.75" y="341.355" width="10.75" height="4.423" fill="#36a9fb"/>
<rect x="854.75" y="336.932" width="10.75" height="4.423" fill="#4f2683"/>
<rect x="854.75" y="332.509" width="10.75" height="4.423" fill="#2ecfd2"/>
<rect x="854.75" y="328.087" width="10.75" height="4.423" fill="#8b0000"/>
<rect x="854.75" y="319.241" width="10.75" height="8.845" fill="#984ea3"/>
<rect x="854.75" y="310.396" width="10.75" height="8.845" fill="#ff7f00"/>
<rect x="854.75" y="279.437" width="10.75" height="30.959" fill="#4daf4a"/>
<rect x="854.75" y="217.519" width="10.75" height="61.918" fill="#377eb8"/>
<rect x="854.75" y="102.529" width="10.75" height="114.990" fill="#e41a1c"/>
<rect x="870.75" y="345.777" width="10.75" height="4.423" fill="#a65628"/>
<rect x="870.75" y="341.355" width="10.75" height="4.423" fill="#36a9fb"/>
<rect x="870.75" y="336.932" width="10.75" height="4.423" fill="#4f2683"/>
<rect x="870.75" y="332.509" width="10.75" height="4.423" fill="#2ecfd2"/>
<rect x="870.75" y="328.087" width="10.75" height="4.423" fill="#8b0000"/>
<rect x="870.75" y="319.241" width="10.75" height="8.845" fill="#984ea3"/>
<rect x="870.75" y="310.396" width="10.75" height="8.845" fill="#ff7f00"/>
<rect x="870.75" y="279.437" width="10.75" height="30.959" fill="#4daf4a"/>
<rect x="870.75" y="217.519" width="10.75" height="61.918" fill="#377eb8"/>
<rect x="870.75" y="102.529" width="10.75" height="114.990" fill="#e41a1c"/>
<rect x="886.75" y="345.777" width="10.75" height="4.423" fill="#a65628"/>
<rect x="886.75" y="341.355" width="10.75" height="4.423" fill="#36a9fb"/>
<rect x="886.75" y="336.932" width="10.75" height="4.423" fill="#4f2683"/>
<rect x="886.75" y="332.509" width="10.75" height="4.423" fill="#2ecfd2"/>
<rect x="886.75" y="328.087" width="10.75" height="4.423" fill="#8b0000"/>
<rect x="886.75" y="319.241" width="10.75" height="8.845" fill="#984ea3"/>
<rect x="886.75" y="310.396" width="10.75" height="8.845" fill="#ff7f00"/>
<rect x="886.75" y="279.437" width="10.75" height="30.959" fill="#4daf4a"/>
<rect x="886.75" y="217.519" width="10.75" height="61.918" fill="#377eb8"/>
<rect x="886.75" y="102.529" width="10.75" height="114.990" fill="#e41a1c"/>
<rect x="902.25" y="345.777" width="10.75" height="4.423" fill="#a65628"/>
<rect x="902.25" y="341.355" width="10.75" height="4.423" fill="#36a9fb"/>
<rect x="902.25" y="336.932" width="10.75" height="4.423" fill="#4f2683"/>
<rect x="902.25" y="332.509" width="10.75" height="4.423" fill="#2ecfd2"/>
<rect x="902.25" y="328.087" width="10.75" height="4.423" fill="#8b0000"/>
<rect x="902.25" y="319.241" width="10.75" height="8.845" fill="#984ea3"/>
<rect x="902.25" y="310.396" width="10.75" height="8.845" fill="#ff7f00"/>
<rect x="902.25" y="279.437" width="10.75" height="30.959" fill="#4daf4a"/>
<rect x="902.25" y="217.519" width="10.75" height="61.918" fill="#377eb8"/>
<rect x="902.25" y="102.529" width="10.75" height="114.990" fill="#e41a1c"/>
<rect x="918.25" y="345.777" width="10.75" height="4.423" fill="#a65628"/>
<rect x="918.25" y="341.355" width="10.75" height="4.423" fill="#36a9fb"/>
<rect x="918.25" y="336.932" width="10.75" height="4.423" fill="#4f2683"/>
<rect x="918.25" y="332.509" width="10.75" height="4.423" fill="#2ecfd2"/>
<rect x="918.25" y="328.087" width="10.75" height="4.423" fill="#8b0000"/>
<rect x="918.25" y="319.241" width="10.75" height="8.845" fill="#984ea3"/>
<rect x="918.25" y="310.396" width="10.75" height="8.845" fill="#ff7f00"/>
<rect x="918.25" y="279.437" width="10.75" height="30.959" fill="#4daf4a"/>
<rect x="918.25" y="217.519" width="10.75" height="61.918" fill="#377eb8"/>
<rect x="918.25" y="102.529" width="10.75" height="114.990" fill="#e41a1c"/>
<rect x="934.0" y="345.777" width="10.75" height="4.423" fill="#a65628"/>
<rect x="934.0" y="341.355" width="10.75" height="4.423" fill="#36a9fb"/>
<rect x="934.0" y="336.932" width="10.75" height="4.423" fill="#4f2683"/>
<rect x="934.0" y="332.509" width="10.75" height="4.423" fill="#2ecfd2"/>
<rect x="934.0" y="328.087" width="10.75" height="4.423" fill="#8b0000"/>
<rect x="934.0" y="319.241" width="10.75" height="8.845" fill="#984ea3"/>
<rect x="934.0" y="310.396" width="10.75" height="8.845" fill="#ff7f00"/>
<rect x="934.0" y="279.437" width="10.75" height="30.959" fill="#4daf4a"/>
<rect x="934.0" y="217.519" width="10.75" height="61.918" fill="#377eb8"/>
<rect x="934.0" y="102.529" width="10.75" height="114.990" fill="#e41a1c"/>
<rect x="949.5" y="345.777" width="10.75" height="4.423" fill="#a65628"/>
<rect x="949.5" y="341.355" width="10.75" height="4.423" fill="#36a9fb"/>
<rect x="949.5" y="336.932" width="10.75" height="4.423" fill="#4f2683"/>
<rect x="949.5" y="332.509" width="10.75" height="4.423" fill="#2ecfd2"/>
<rect x="949.5" y="328.087" width="10.75" height="4.423" fill="#8b0000"/>
<rect x="949.5" y="319.241" width="10.75" height="8.845" fill="#984ea3"/>
<rect x="949.5" y="310.396" width="10.75" height="8.845" fill="#ff7f00"/>
<rect x="949.5" y="279.437" width="10.75" height="30.959" fill="#4daf4a"/>
<rect x="949.5" y="217.519" width="10.75" height="61.918" fill="#377eb8"/>
<rect x="949.5" y="102.529" width="10.75" height="114.990" fill="#e41a1c"/>
<rect x="965.25" y="345.777" width="10.75" height="4.423" fill="#a65628"/>
<rect x="965.25" y="341.355" width="10.75" height="4.423" fill="#36a9fb"/>
<rect x="965.25" y="336.932" width="10.75" height="4.423" fill="#4f2683"/>
<rect x="965.25" y="332.509" width="10.75" height="4.423" fill="#2ecfd2"/>
<rect x="965.25" y="328.087" width="10.75" height="4.423" fill="#8b0000"/>
<rect x="965.25" y="319.241" width="10.75" height="8.845" fill="#984ea3"/>
<rect x="965.25" y="310.396" width="10.75" height="8.845" fill="#ff7f00"/>
<rect x="965.25" y="279.437" width="10.75" height="30.959" fill="#4daf4a"/>
<rect x="965.25" y="217.519" width="10.75" height="61.918" fill="#377eb8"/>
<rect x="965.25" y="102.529" width="10.75" height="114.990" fill="#e41a1c"/>
<rect x="980.0" y="345.777" width="10.75" height="4.423" fill="#a65628"/>
<rect x="980.0" y="341.355" width="10.75" height="4.423" fill="#36a9fb"/>
<rect x="980.0" y="336.932" width="10.75" height="4.423" fill="#4f2683"/>
<rect x="980.0" y="332.509" width="10.75" height="4.423" fill="#2ecfd2"/>
<rect x="980.0" y="328.087" width="10.75" height="4.423" fill="#8b0000"/>
<rect x="980.0" y="319.241" width="10.75" height="8.845" fill="#984ea3"/>
<rect x="980.0" y="310.396" width="10.75" height="8.845" fill="#ff7f00"/>
<rect x="980.0" y="279.437" width="10.75" height="30.959" fill="#4daf4a"/>
<rect x="980.0" y="217.519" width="10.75" height="61.918" fill="#377eb8"/>
<rect x="980.0" y="102.529" width="10.75" height="114.990" fill="#e41a1c"/>
<rect x="995.75" y="345.777" width="10.75" height="4.423" fill="#a65628"/>
<rect x="995.75" y="341.355" width="10.75" height="4.423" fill="#36a9fb"/>
<rect x="995.75" y="336.932" width="10.75" height="4.423" fill="#4f2683"/>
<rect x="995.75" y="332.509" width="10.75" height="4.423" fill="#2ecfd2"/>
<rect x="995.75" y="328.087" width="10.75" height="4.423" fill="#8b0000"/>
<rect x="995.75" y="319.241" width="10.75" height="8.845" fill="#984ea3"/>
<rect x="995.75" y="310.396" width="10.75" height="8.845" fill="#ff7f00"/>
<rect x="995.75" y="279.437" width="10.75" height="30.959" fill="#4daf4a"/>
<rect x="995.75" y="217.519" width="10.75" height="61.918" fill="#377eb8"/>
<rect x="995.75" y="102.529" width="10.75" height="114.990" fill="#e41a1c"/>
<rect x="1011.25" y="345.777" width="10.75" height="4.423" fill="#a65628"/>
<rect x="1011.25" y="341.355" width="10.75" height="4.423" fill="#36a9fb"/>
<rect x="1011.25" y="336.932" width="10.75" height="4.423" fill="#4f2683"/>
<rect x="1011.25" y="332.509" width="10.75" height="4.423" fill="#2ecfd2"/>
<rect x="1011.25" y="328.087" width="10.75" height="4.423" fill="#8b0000"/>
<rect x="1011.25" y="319.241" width="10.75" height="8.845" fill="#984ea3"/>
<rect x="1011.25" y="310.396" width="10.75" height="8.845" fill="#ff7f00"/>
<rect x="1011.25" y="279.437" width="10.75" height="30.959" fill="#4daf4a"/>
<rect x="1011.25" y="217.519" width="10.75" height="61.918" fill="#377eb8"/>
<rect x="1011.25" y="102.529" width="10.75" height="114.990" fill="#e41a1c"/>
<rect x="1026.5" y="345.777" width="10.75" height="4.423" fill="#a65628"/>
<rect x="1026.5" y="341.355" width="10.75" height="4.423" fill="#36a9fb"/>
<rect x="1026.5" y="336.932" width="10.75" height="4.423" fill="#4f2683"/>
<rect x="1026.5" y="332.509" width="10.75" height="4.423" fill="#2ecfd2"/>
<rect x="1026.5" y="328.087" width="10.75" height="4.423" fill="#8b0000"/>
<rect x="1026.5" y="319.241" width="10.75" height="8.845" fill="#984ea3"/>
<rect x="1026.5" y="310.396" width="10.75" height="8.845" fill="#ff7f00"/>
<rect x="1026.5" y="279.437" width="10.75" height="30.959" fill="#4daf4a"/>
<rect x="1026.5" y="217.519" width="10.75" height="61.918" fill="#377eb8"/>
<rect x="1026.5" y="102.529" width="10.75" height="114.990" fill="#e41a1c"/>
<rect x="1043.5" y="345.777" width="10.75" height="4.423" fill="#a65628"/>
<rect x="1043.5" y="341.355" width="10.75" height="4.423" fill="#36a9fb"/>
<rect x="1043.5" y="336.932" width="10.75" height="4.423" fill="#4f2683"/>
<rect x="1043.5" y="332.509" width="10.75" height="4.423" fill="#2ecfd2"/>
<rect x="1043.5" y="328.087" width="10.75" height="4.423" fill="#8b0000"/>
<rect x="1043.5" y="319.241" width="10.75" height="8.845" fill="#984ea3"/>
<rect x="1043.5" y="310.396" width="10.75" height="8.845" fill="#ff7f00"/>
<rect x="1043.5" y="279.437" width="10.75" height="30.959" fill="#4daf4a"/>
<rect x="1043.5" y="217.519" width="10.75" height="61.918" fill="#377eb8"/>
<rect x="1043.5" y="102.529" width="10.75" height="114.990" fill="#e41a1c"/>
<rect x="1059.5" y="345.777" width="10.75" height="4.423" fill="#a65628"/>
<rect x="1059.5" y="341.355" width="10.75" height="4.423" fill="#36a9fb"/>
<rect x="1059.5" y="336.932" width="10.75" height="4.423" fill="#4f2683"/>
<rect x="1059.5" y="332.509" width="10.75" height="4.423" fill="#2ecfd2"/>
<rect x="1059.5" y="328.087" width="10.75" height="4.423" fill="#8b0000"/>
<rect x="1059.5" y="319.241" width="10.75" height="8.845" fill="#984ea3"/>
<rect x="1059.5" y="310.396" width="10.75" height="8.845" fill="#ff7f00"/>
<rect x="1059.5" y="279.437" width="10.75" height="30.959" fill="#4daf4a"/>
<rect x="1059.5" y="217.519" width="10.75" height="61.918" fill="#377eb8"/>
<rect x="1059.5" y="102.529" width="10.75" height="114.990" fill="#e41a1c"/>
<rect x="1077.5" y="345.777" width="10.75" height="4.423" fill="#a65628"/>
<rect x="1077.5" y="341.355" width="10.75" height="4.423" fill="#36a9fb"/>
<rect x="1077.5" y="336.932" width="10.75" height="4.423" fill="#4f2683"/>
<rect x="1077.5" y="332.509" width="10.75" height="4.423" fill="#2ecfd2"/>
<rect x="1077.5" y="328.087" width="10.75" height="4.423" fill="#8b0000"/>
<rect x="1077.5" y="319.241" width="10.75" height="8.845" fill="#984ea3"/>
<rect x="1077.5" y="310.396" width="10.75" height="8.845" fill="#ff7f00"/>
<rect x="1077.5" y="279.437" width="10.75" height="30.959" fill="#4daf4a"/>
<rect x="1077.5" y="217.519" width="10.75" height="61.918" fill="#377eb8"/>
<rect x="1077.5" y="102.529" width="10.75" height="114.990" fill="#e41a1c"/>
<rect x="1092.5" y="345.777" width="5.50" height="4.423" fill="#a65628"/>
<rect x="1092.5" y="341.355" width="5.50" height="4.423" fill="#36a9fb"/>
<rect x="1092.5" y="336.932" width="5.50" height="4.423" fill="#4f2683"/>
<rect x="1092.5" y="332.509" width="5.50" height="4.423" fill="#2ecfd2"/>
<rect x="1092.5" y="328.087" width="5.50" height="4.423" fill="#8b0000"/>
<rect x="1092.5" y="319.241" width="5.50" height="8.845" fill="#984ea3"/>
<rect x="1092.5" y="310.396" width="5.50" height="8.845" fill="#ff7f00"/>
<rect x="1092.5" y="279.437" width="5.50" height="30.959" fill="#4daf4a"/>
<rect x="1092.5" y="217.519" width="5.50" height="61.918" fill="#377eb8"/>
<rect x="1092.5" y="102.529" width="5.50" height="114.990" fill="#e41a1c"/>
</g>
<line x1="288.07" y1="85.5" x2="288.07" y2="350.7" stroke="#a2a2a2" stroke-width="1.45"/>
<line x1="282.2" y1="350.20" x2="288.07" y2="350.20" stroke="#a2a2a2" stroke-width="1.25"/>
<line x1="282.2" y1="328.09" x2="288.07" y2="328.09" stroke="#a2a2a2" stroke-width="1.25"/>
<line x1="282.2" y1="305.97" x2="288.07" y2="305.97" stroke="#a2a2a2" stroke-width="1.25"/>
<line x1="282.2" y1="283.86" x2="288.07" y2="283.86" stroke="#a2a2a2" stroke-width="1.25"/>
<line x1="282.2" y1="261.75" x2="288.07" y2="261.75" stroke="#a2a2a2" stroke-width="1.25"/>
<line x1="282.2" y1="239.63" x2="288.07" y2="239.63" stroke="#a2a2a2" stroke-width="1.25"/>
<line x1="282.2" y1="217.52" x2="288.07" y2="217.52" stroke="#a2a2a2" stroke-width="1.25"/>
<line x1="282.2" y1="195.41" x2="288.07" y2="195.41" stroke="#a2a2a2" stroke-width="1.25"/>
<line x1="282.2" y1="173.29" x2="288.07" y2="173.29" stroke="#a2a2a2" stroke-width="1.25"/>
<line x1="282.2" y1="151.18" x2="288.07" y2="151.18" stroke="#a2a2a2" stroke-width="1.25"/>
<line x1="282.2" y1="129.06" x2="288.07" y2="129.06" stroke="#a2a2a2" stroke-width="1.25"/>
<line x1="282.2" y1="106.95" x2="288.07" y2="106.95" stroke="#a2a2a2" stroke-width="1.25"/>
<line x1="287.5" y1="350.2" x2="1098" y2="350.2" stroke="#999" stroke-width="1.3"/>
<line x1="356.30" y1="351" x2="356.30" y2="355.6" stroke="#b4b4b4" stroke-width="1"/>
<line x1="433.98" y1="351" x2="433.98" y2="355.6" stroke="#b4b4b4" stroke-width="1"/>
<line x1="511.66" y1="351" x2="511.66" y2="355.6" stroke="#b4b4b4" stroke-width="1"/>
<line x1="589.34" y1="351" x2="589.34" y2="355.6" stroke="#b4b4b4" stroke-width="1"/>
<line x1="667.02" y1="351" x2="667.02" y2="355.6" stroke="#b4b4b4" stroke-width="1"/>
<line x1="744.70" y1="351" x2="744.70" y2="355.6" stroke="#b4b4b4" stroke-width="1"/>
<line x1="822.38" y1="351" x2="822.38" y2="355.6" stroke="#b4b4b4" stroke-width="1"/>
<line x1="900.06" y1="351" x2="900.06" y2="355.6" stroke="#b4b4b4" stroke-width="1"/>
<line x1="977.74" y1="351" x2="977.74" y2="355.6" stroke="#b4b4b4" stroke-width="1"/>
<line x1="1055.42" y1="351" x2="1055.42" y2="355.6" stroke="#b4b4b4" stroke-width="1"/>
<line x1="1097.5" y1="351" x2="1097.5" y2="355.6" stroke="#b4b4b4" stroke-width="1"/>
<g clip-path="url(#cpx)">
<text x="278.62" y="367.7" font-size="12" fill="#2a2a2a" stroke="#2a2a2a" stroke-width="0.2" text-anchor="middle" font-family='"Liberation Sans", sans-serif'>00:08</text>
<text x="356.30" y="367.7" font-size="12" fill="#2a2a2a" stroke="#2a2a2a" stroke-width="0.2" text-anchor="middle" font-family='"Liberation Sans", sans-serif'>00:13</text>
<text x="433.98" y="367.7" font-size="12" fill="#2a2a2a" stroke="#2a2a2a" stroke-width="0.2" text-anchor="middle" font-family='"Liberation Sans", sans-serif'>00:18</text>
<text x="511.66" y="367.7" font-size="12" fill="#2a2a2a" stroke="#2a2a2a" stroke-width="0.2" text-anchor="middle" font-family='"Liberation Sans", sans-serif'>00:23</text>
<text x="589.34" y="367.7" font-size="12" fill="#2a2a2a" stroke="#2a2a2a" stroke-width="0.2" text-anchor="middle" font-family='"Liberation Sans", sans-serif'>00:28</text>
<text x="667.02" y="367.7" font-size="12" fill="#2a2a2a" stroke="#2a2a2a" stroke-width="0.2" text-anchor="middle" font-family='"Liberation Sans", sans-serif'>00:33</text>
<text x="744.70" y="367.7" font-size="12" fill="#2a2a2a" stroke="#2a2a2a" stroke-width="0.2" text-anchor="middle" font-family='"Liberation Sans", sans-serif'>00:38</text>
<text x="822.38" y="367.7" font-size="12" fill="#2a2a2a" stroke="#2a2a2a" stroke-width="0.2" text-anchor="middle" font-family='"Liberation Sans", sans-serif'>00:43</text>
<text x="900.06" y="367.7" font-size="12" fill="#2a2a2a" stroke="#2a2a2a" stroke-width="0.2" text-anchor="middle" font-family='"Liberation Sans", sans-serif'>00:48</text>
<text x="977.74" y="367.7" font-size="12" fill="#2a2a2a" stroke="#2a2a2a" stroke-width="0.2" text-anchor="middle" font-family='"Liberation Sans", sans-serif'>00:53</text>
<text x="1055.42" y="367.7" font-size="12" fill="#2a2a2a" stroke="#2a2a2a" stroke-width="0.2" text-anchor="middle" font-family='"Liberation Sans", sans-serif'>00:58</text>
</g>
<path d="M451.9 342.6 L459.2 342.6 L460.4 351 L472.8 351 L483.3 362 L471.7 362 L471.7 353.7 L461.5 353.7 Z" fill="#5ab4ea" fill-opacity="0.38"/>
<path d="M807.6 342.6 L818.6 342.6 L819.0 351 L846.2 351 L857.0 362 L846.0 362 L846.0 353.7 L822.0 353.7 Z" fill="#5ab4ea" fill-opacity="0.38"/>
<line x1="416.6" y1="385.4" x2="1092.6" y2="385.4" stroke="#828282" stroke-width="6.2" stroke-linecap="round"/>
<g transform="translate(538.6,201.2) scale(0.90)"><path d="M4.2 0.8 C5.4 0.8 6.0 1.6 6.0 2.8 L6.0 7.2 C6.6 6.6 8.0 6.7 8.4 7.6 C9.1 6.9 10.6 7.1 10.9 8.1 C11.7 7.5 13.2 7.9 13.4 9.0 C14.6 8.8 15.3 9.6 15.3 10.8 L15.3 13.2 C15.3 15.4 14.4 16.0 14.2 17.4 L7.0 17.4 C6.2 15.6 4.4 14.0 2.2 12.0 C0.6 10.6 0.2 9.6 1.0 8.9 C1.8 8.2 2.8 8.6 3.6 9.4 L2.6 2.8 C2.5 1.6 3.0 0.8 4.2 0.8 Z" fill="#fff" stroke="#111" stroke-width="1.1" stroke-linejoin="round"/><line x1="8.4" y1="10.6" x2="8.4" y2="14.6" stroke="#111" stroke-width="0.9"/><line x1="10.7" y1="10.6" x2="10.7" y2="14.6" stroke="#111" stroke-width="0.9"/><line x1="13.0" y1="10.6" x2="13.0" y2="14.6" stroke="#111" stroke-width="0.9"/></g>
</svg>
<div id="tip"></div>
<div class="hl" style="left:573px;top:146px;width:140px"></div>
<div class="hl" style="left:573px;top:366px;width:140px"></div>
<div id="txt">
<span class="t" id="title" style="font-size:14px;top:20px;left:115.57px;color:#111;-webkit-text-stroke:0.12px #111;transform:scaleX(1.1477);">Top BrightScript objects count</span>
<span class="t" id="ctype" style="font-size:14px;top:19px;left:602.92px;color:#383838;transform:scaleX(1.1500);">Chart type:</span>
<span class="t" id="show" style="font-size:14px;top:19px;left:796.64px;color:#383838;transform:scaleX(1.1055);">Show:</span>
<span class="t" id="top10" style="font-size:14px;top:19px;left:864.55px;color:#222;transform:scaleX(1.0535);">Top 10</span>
<span class="t" id="lp0" style="font-size:12px;top:68px;left:17.42px;color:#e41a1c;transform:scaleX(1.0679);">1. roSGNode:Node</span>
<span class="t" id="lpc0" style="font-size:12px;top:68px;left:128.21px;color:#e41a1c;transform:scaleX(1.1000);">:</span>
<span class="t" id="lpv0" style="font-size:12px;top:68px;left:192.91px;color:#e41a1c;transform:scaleX(1.0700);">26</span>
<span class="t" id="lp1" style="font-size:12px;top:94px;left:17.70px;color:#377eb8;transform:scaleX(1.1223);">2. roAssociativeArray</span>
<span class="t" id="lpc1" style="font-size:12px;top:94px;left:146.91px;color:#377eb8;transform:scaleX(1.1000);">:</span>
<span class="t" id="lpv1" style="font-size:12px;top:94px;left:192.61px;color:#377eb8;transform:scaleX(1.0700);">14</span>
<span class="t" id="lp2" style="font-size:12px;top:120px;left:17.64px;color:#4daf4a;transform:scaleX(1.0955);">3. roSGNode:Label</span>
<span class="t" id="lpc2" style="font-size:12px;top:120px;left:131.51px;color:#4daf4a;transform:scaleX(1.1000);">:</span>
<span class="t" id="lpv2" style="font-size:12px;top:120px;left:200.10px;color:#4daf4a;transform:scaleX(1.0700);">7</span>
<span class="t" id="lp3" style="font-size:12px;top:146px;left:18.06px;color:#ff7f00;transform:scaleX(1.1367);">4. roArray</span>
<span class="t" id="lpc3" style="font-size:12px;top:146px;left:80.11px;color:#ff7f00;transform:scaleX(1.1000);">:</span>
<span class="t" id="lpv3" style="font-size:12px;top:146px;left:200.10px;color:#ff7f00;transform:scaleX(1.0700);">2</span>
<span class="t" id="lp4" style="font-size:12px;top:172px;left:17.56px;color:#984ea3;transform:scaleX(1.1280);">5. roGlobal</span>
<span class="t" id="lpc4" style="font-size:12px;top:172px;left:85.11px;color:#984ea3;transform:scaleX(1.1000);">:</span>
<span class="t" id="lpv4" style="font-size:12px;top:172px;left:200.10px;color:#984ea3;transform:scaleX(1.0700);">2</span>
<span class="t" id="lp5" style="font-size:12px;top:198px;left:17.66px;color:#8b1010;transform:scaleX(1.1491);">6. roInt</span>
<span class="t" id="lpc5" style="font-size:12px;top:198px;left:62.71px;color:#8b1010;transform:scaleX(1.1000);">:</span>
<span class="t" id="lpv5" style="font-size:12px;top:198px;left:201.42px;color:#8b1010;transform:scaleX(0.8500);">1</span>
<span class="t" id="lp6" style="font-size:12px;top:224px;left:17.73px;color:#22bfc6;transform:scaleX(1.0914);">7. roList</span>
<span class="t" id="lpc6" style="font-size:12px;top:224px;left:66.31px;color:#22bfc6;transform:scaleX(1.1000);">:</span>
<span class="t" id="lpv6" style="font-size:12px;top:224px;left:201.42px;color:#22bfc6;transform:scaleX(0.8500);">1</span>
<span class="t" id="lp7" style="font-size:12px;top:250px;left:17.77px;color:#4a2a70;transform:scaleX(1.0964);">8. roMessagePort</span>
<span class="t" id="lpc7" style="font-size:12px;top:250px;left:123.81px;color:#4a2a70;transform:scaleX(1.1000);">:</span>
<span class="t" id="lpv7" style="font-size:12px;top:250px;left:201.42px;color:#4a2a70;transform:scaleX(0.8500);">1</span>
<span class="t" id="lp8" style="font-size:12px;top:276px;left:17.73px;color:#36a9fb;transform:scaleX(1.0729);">9. roSGNode:DetailsSc...</span>
<span class="t" id="lpc8" style="font-size:12px;top:276px;left:166.51px;color:#36a9fb;transform:scaleX(1.1000);">:</span>
<span class="t" id="lpv8" style="font-size:12px;top:276px;left:201.42px;color:#36a9fb;transform:scaleX(0.8500);">1</span>
<span class="t" id="lp9" style="font-size:12px;top:302px;left:17.43px;color:#a65628;transform:scaleX(1.0568);">10. roSGNode:GridScre...</span>
<span class="t" id="lpc9" style="font-size:12px;top:302px;left:166.51px;color:#a65628;transform:scaleX(1.1000);">:</span>
<span class="t" id="lpv9" style="font-size:12px;top:302px;left:201.42px;color:#a65628;transform:scaleX(0.8500);">1</span>
<span class="t" id="lptot" style="font-size:12px;top:340px;left:18.47px;color:#333;transform:scaleX(1.1641);">Total</span>
<span class="t" id="lptotc" style="font-size:12px;top:340px;left:49.21px;color:#333;transform:scaleX(1.1000);">:</span>
<span class="t" id="lptotv" style="font-size:12px;top:340px;left:192.91px;color:#333;transform:scaleX(1.0700);">56</span>
<span class="t" id="docs" style="font-size:12px;top:376px;left:176.78px;color:#662d91;transform:scaleX(1.1161);">Docs</span>
<span class="t" id="y0" style="font-size:12px;top:344px;left:272.46px;color:#222;-webkit-text-stroke:0.2px #222;transform:scaleX(1.0300);">0</span>
<span class="t" id="y5" style="font-size:12px;top:322px;left:272.56px;color:#222;-webkit-text-stroke:0.2px #222;transform:scaleX(1.0300);">5</span>
<span class="t" id="y10" style="font-size:12px;top:300px;left:265.59px;color:#222;-webkit-text-stroke:0.2px #222;transform:scaleX(1.0300);">10</span>
<span class="t" id="y15" style="font-size:12px;top:278px;left:265.76px;color:#222;-webkit-text-stroke:0.2px #222;transform:scaleX(1.0300);">15</span>
<span class="t" id="y20" style="font-size:12px;top:256px;left:265.59px;color:#222;-webkit-text-stroke:0.2px #222;transform:scaleX(1.0300);">20</span>
<span class="t" id="y25" style="font-size:12px;top:234px;left:265.76px;color:#222;-webkit-text-stroke:0.2px #222;transform:scaleX(1.0300);">25</span>
<span class="t" id="y30" style="font-size:12px;top:212px;left:265.59px;color:#222;-webkit-text-stroke:0.2px #222;transform:scaleX(1.0300);">30</span>
<span class="t" id="y35" style="font-size:12px;top:190px;left:265.76px;color:#222;-webkit-text-stroke:0.2px #222;transform:scaleX(1.0300);">35</span>
<span class="t" id="y40" style="font-size:12px;top:168px;left:265.59px;color:#222;-webkit-text-stroke:0.2px #222;transform:scaleX(1.0300);">40</span>
<span class="t" id="y45" style="font-size:12px;top:145px;left:265.76px;color:#222;-webkit-text-stroke:0.2px #222;transform:scaleX(1.0300);">45</span>
<span class="t" id="y50" style="font-size:12px;top:123px;left:265.59px;color:#222;-webkit-text-stroke:0.2px #222;transform:scaleX(1.0300);">50</span>
<span class="t" id="y55" style="font-size:12px;top:101px;left:265.76px;color:#222;-webkit-text-stroke:0.2px #222;transform:scaleX(1.0300);">55</span>
<span class="t" id="ttc" style="font-size:10.3px;top:130px;left:572.84px;color:#333;transform:scaleX(1.0865);">Timecode</span>
<span class="t" id="ttcc" style="font-size:10.3px;top:130px;left:624.10px;color:#333;transform:scaleX(1.1000);">:</span>
<span class="t" id="ttcv" style="font-size:10.3px;top:130px;left:667.34px;color:#333;transform:scaleX(1.1498);">00:00:25</span>
<span class="t" id="tt0" style="font-size:10.3px;top:153px;left:572.54px;color:#e41a1c;transform:scaleX(1.0694);">roSGNode:Node</span>
<span class="t" id="ttx0" style="font-size:10.3px;top:153px;left:656.60px;color:#e41a1c;transform:scaleX(1.1000);">:</span>
<span class="t" id="ttv0" style="font-size:10.3px;top:153px;left:701.08px;color:#e41a1c;transform:scaleX(1.0800);">22</span>
<span class="t" id="tt1" style="font-size:10.3px;top:175px;left:572.52px;color:#377eb8;transform:scaleX(1.0969);">roAssociativeArray</span>
<span class="t" id="ttx1" style="font-size:10.3px;top:175px;left:669.60px;color:#377eb8;transform:scaleX(1.1000);">:</span>
<span class="t" id="ttv1" style="font-size:10.3px;top:175px;left:701.02px;color:#377eb8;transform:scaleX(1.0800);">12</span>
<span class="t" id="tt2" style="font-size:10.3px;top:197px;left:572.54px;color:#4daf4a;transform:scaleX(1.0705);">roSGNode:Label</span>
<span class="t" id="ttx2" style="font-size:10.3px;top:197px;left:657.10px;color:#4daf4a;transform:scaleX(1.1000);">:</span>
<span class="t" id="ttv2" style="font-size:10.3px;top:197px;left:707.18px;color:#4daf4a;transform:scaleX(1.0800);">7</span>
<span class="t" id="tt3" style="font-size:10.3px;top:219px;left:572.50px;color:#ff7f00;transform:scaleX(1.1276);">roArray</span>
<span class="t" id="ttx3" style="font-size:10.3px;top:219px;left:613.30px;color:#ff7f00;transform:scaleX(1.1000);">:</span>
<span class="t" id="ttv3" style="font-size:10.3px;top:219px;left:707.22px;color:#ff7f00;transform:scaleX(1.0800);">2</span>
<span class="t" id="tt4" style="font-size:10.3px;top:241px;left:572.52px;color:#984ea3;transform:scaleX(1.1001);">roGlobal</span>
<span class="t" id="ttx4" style="font-size:10.3px;top:241px;left:617.80px;color:#984ea3;transform:scaleX(1.1000);">:</span>
<span class="t" id="ttv4" style="font-size:10.3px;top:241px;left:707.22px;color:#984ea3;transform:scaleX(1.0800);">2</span>
<span class="t" id="tt5" style="font-size:10.3px;top:263px;left:572.52px;color:#8b1010;transform:scaleX(1.1486);">roInt</span>
<span class="t" id="ttx5" style="font-size:10.3px;top:263px;left:599.10px;color:#8b1010;transform:scaleX(1.1000);">:</span>
<span class="t" id="ttv5" style="font-size:10.3px;top:263px;left:708.39px;color:#8b1010;transform:scaleX(0.8500);">1</span>
<span class="t" id="tt6" style="font-size:10.3px;top:285px;left:572.51px;color:#22bfc6;transform:scaleX(1.1265);">roList</span>
<span class="t" id="ttx6" style="font-size:10.3px;top:285px;left:603.80px;color:#22bfc6;transform:scaleX(1.1000);">:</span>
<span class="t" id="ttv6" style="font-size:10.3px;top:285px;left:708.39px;color:#22bfc6;transform:scaleX(0.8500);">1</span>
<span class="t" id="tt7" style="font-size:10.3px;top:307px;left:572.54px;color:#4a2a70;transform:scaleX(1.0659);">roMessagePort</span>
<span class="t" id="ttx7" style="font-size:10.3px;top:307px;left:649.80px;color:#4a2a70;transform:scaleX(1.1000);">:</span>
<span class="t" id="ttv7" style="font-size:10.3px;top:307px;left:708.39px;color:#4a2a70;transform:scaleX(0.8500);">1</span>
<span class="t" id="tt8" style="font-size:10.3px;top:329px;left:572.56px;color:#36a9fb;transform:scaleX(1.0465);">roSGNode:DetailsS...</span>
<span class="t" id="ttx8" style="font-size:10.3px;top:329px;left:682.10px;color:#36a9fb;transform:scaleX(1.1000);">:</span>
<span class="t" id="ttv8" style="font-size:10.3px;top:329px;left:708.39px;color:#36a9fb;transform:scaleX(0.8500);">1</span>
<span class="t" id="tt9" style="font-size:10.3px;top:351px;left:572.56px;color:#a65628;transform:scaleX(1.0481);">roSGNode:GridScre...</span>
<span class="t" id="ttx9" style="font-size:10.3px;top:351px;left:682.10px;color:#a65628;transform:scaleX(1.1000);">:</span>
<span class="t" id="ttv9" style="font-size:10.3px;top:351px;left:708.39px;color:#a65628;transform:scaleX(0.8500);">1</span>
<span class="t" id="tttot" style="font-size:10.3px;top:373px;left:573.59px;color:#333;transform:scaleX(1.1094);">Total</span>
<span class="t" id="tttotc" style="font-size:10.3px;top:373px;left:599.30px;color:#333;transform:scaleX(1.1000);">:</span>
<span class="t" id="tttotv" style="font-size:10.3px;top:373px;left:700.89px;color:#333;transform:scaleX(1.0800);">50</span>
</div>
<div id="frame"></div>
</body></html>
